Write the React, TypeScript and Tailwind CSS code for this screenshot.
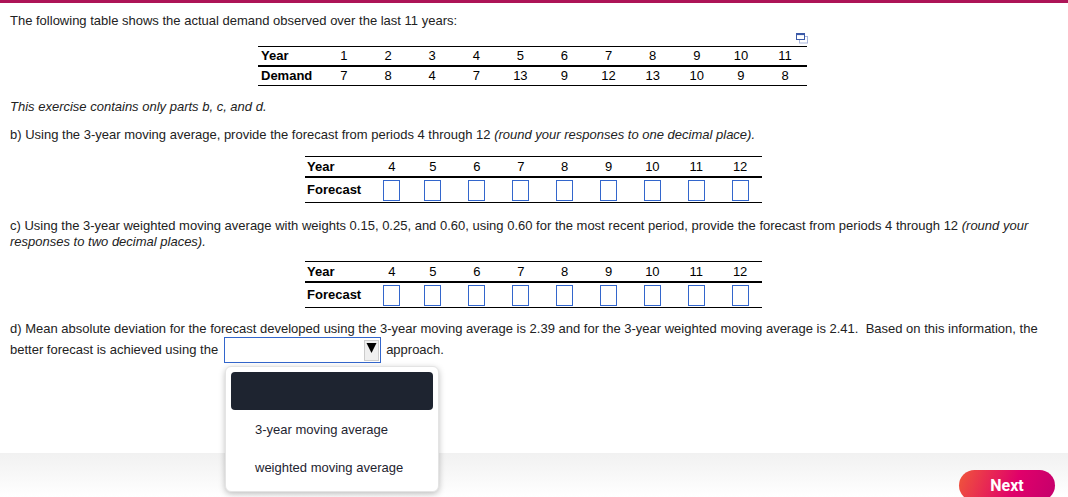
const demandYears = ['1', '2', '3', '4', '5', '6', '7', '8', '9', '10', '11'];
const demand = ['7', '8', '4', '7', '13', '9', '12', '13', '10', '9', '8'];
const forecastYears = ['4', '5', '6', '7', '8', '9', '10', '11', '12'];

// the first two forecast columns aren't evenly spaced in the reference
const forecastCol = (i: number) =>
  i === 0 ? 'w-[44px] pl-[2px]' : i === 1 ? 'w-[42px] pr-[2px]' : 'w-[43.9px]';

function PopoutIcon() {
  return (
    <svg width="12" height="11" viewBox="0 0 12 11" className="block">
      <rect x="3.5" y="3.5" width="8" height="6.5" fill="#fff" stroke="#a9b6dc" strokeWidth="1" />
      <rect x="0.5" y="0.5" width="8" height="6" fill="#fff" stroke="#3c5ba8" strokeWidth="1" />
      <rect x="0.5" y="0.5" width="8" height="1.6" fill="#3c5ba8" />
    </svg>
  );
}

function DemandTable() {
  return (
    <div className="ml-[248px] w-[549px] text-black">
      <div className="flex h-[19px] items-center border-t border-black">
        <div className="w-[64px] pl-[3px] font-bold">Year</div>
        {demandYears.map((y) => (
          <div key={y} className="w-[44.2px] text-center">{y}</div>
        ))}
      </div>
      <div className="flex h-[20px] items-center border-t-2 border-black">
        <div className="w-[64px] pl-[3px] font-bold">Demand</div>
        {demand.map((d, i) => (
          <div key={i} className="w-[44.2px] text-center">{d}</div>
        ))}
      </div>
      <div className="border-t border-black" />
    </div>
  );
}

function ForecastTable() {
  return (
    <div className="ml-[295px] w-[457px] text-black">
      <div className="flex h-[20px] items-center border-t border-black">
        <div className="w-[64px] pl-[2px] font-bold">Year</div>
        {forecastYears.map((y, i) => (
          <div key={y} className={`${forecastCol(i)} text-center`}>{y}</div>
        ))}
      </div>
      <div className="flex h-[26px] items-center border-t-2 border-black">
        <div className="w-[64px] pl-[2px] font-bold">Forecast</div>
        {forecastYears.map((y, i) => (
          <div key={y} className={`${forecastCol(i)} flex justify-center`}>
            <div className="h-[21px] w-[17px] border border-[#3366cc] bg-white" />
          </div>
        ))}
      </div>
      <div className="border-t border-black" />
    </div>
  );
}

export default function App() {
  return (
    <div className="relative flex h-[497px] w-[1068px] flex-col overflow-hidden bg-white font-['Liberation_Sans',Arial,sans-serif] text-[13px] leading-[16px] text-[#222]">
      <div className="h-[3px] shrink-0 bg-[#ad1457]" />

      <div className="flex-1 pl-[10px]">
        <p className="mt-[10px]">The following table shows the actual demand observed over the last 11 years:</p>

        <div className="mt-[4px] flex h-[13px] justify-end pr-[260px]">
          <PopoutIcon />
        </div>
        <DemandTable />

        <p className="mt-[13px] italic">This exercise contains only parts b, c, and d.</p>
        <p className="mt-[12px]">
          b) Using the 3-year moving average, provide the forecast from periods 4 through 12{' '}
          <i>(round your responses to one decimal place).</i>
        </p>

        <div className="mt-[13px]">
          <ForecastTable />
        </div>

        <p className="mt-[15px] w-[1040px]">
          c) Using the 3-year weighted moving average with weights 0.15, 0.25, and 0.60, using 0.60 for the most recent period, provide the forecast from periods 4 through 12{' '}
          <i>(round your responses to two decimal places).</i>
        </p>

        <div className="mt-[11px]">
          <ForecastTable />
        </div>

        <p className="mt-[13px]">
          d) Mean absolute deviation for the forecast developed using the 3-year moving average is 2.39 and for the 3-year weighted moving average is 2.41.&nbsp; Based on this information, the
        </p>
        <div className="flex items-center">
          <span>better forecast is achieved using the</span>
          <div className="ml-[6px] flex h-[26px] w-[157px] items-center justify-end border border-[#3366cc] bg-white pr-[1px]">
            <div className="flex h-[21px] w-[15px] items-start justify-center border border-[#ccc] bg-[#efefef] text-black">
              <svg width="11" height="12" viewBox="0 0 11 12" className="mt-[1px]">
                <path d="M0.5 1h10L5.5 11z" fill="#000" />
              </svg>
            </div>
          </div>
          <span className="ml-[5px]">approach.</span>
        </div>
      </div>

      <div className="relative h-[44px] shrink-0 bg-gradient-to-b from-[#f1f1f1] to-white">
        <button className="absolute left-[959px] top-[17px] h-[31px] w-[96px] rounded-full bg-[linear-gradient(110deg,#f0563a_0%,#e0006a_58%,#c4006c_100%)] font-['Roboto',sans-serif] text-[16px] font-bold text-white">
          <span className="relative top-0">Next</span>
        </button>
      </div>

      <div className="absolute left-[225px] top-[366px] h-[126px] w-[214px] rounded-[6px] border border-[#e4e4e4] bg-white p-[5px] text-[13px] shadow-[0_2px_6px_rgba(0,0,0,0.25)]">
        <div className="h-[38px] rounded-[4px] bg-[#1e2430]" />
        <div className="mt-[11px] pl-[24px] leading-[18px] text-[#1e2430]">3-year moving average</div>
        <div className="mt-[20px] pl-[24px] leading-[18px] text-[#1e2430]">weighted moving average</div>
      </div>
    </div>
  );
}
